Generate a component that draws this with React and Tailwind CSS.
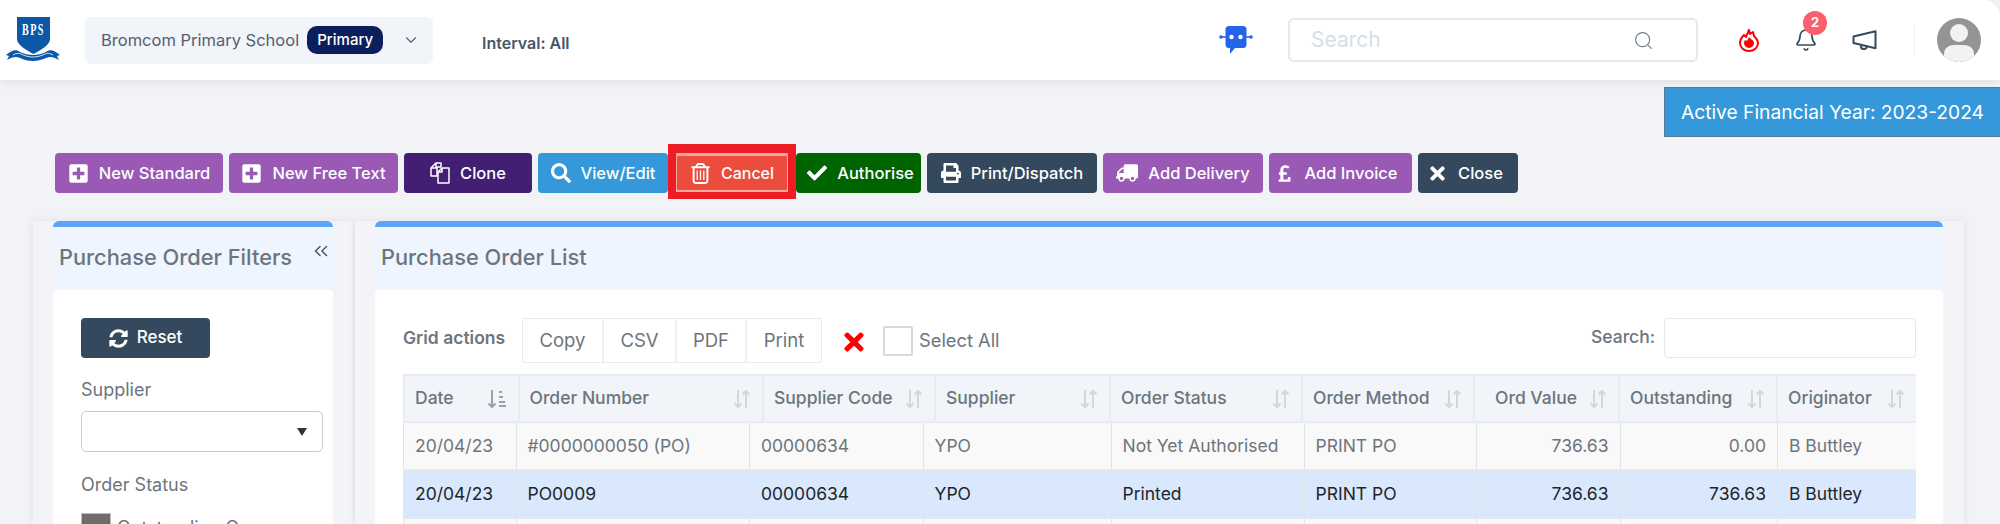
import React from "react";
import { Bell, ChevronDown, ChevronsLeft, Search } from "lucide-react";
import {
  FaCheck,
  FaPlusSquare,
  FaPoundSign,
  FaPrint,
  FaSearch,
  FaSyncAlt,
  FaTimes,
  FaTruck,
} from "react-icons/fa";
import { FaRegTrashCan } from "react-icons/fa6";

const Logo = () => (
  <svg width="56" height="48" viewBox="0 0 56 48" className="shrink-0">
    <path d="M12 1h33v22c0 6-9 11-16.500 15C21 34 12 29 12 23z" fill="#0b57a8" />
    <text transform="translate(28.500 19) scale(0.72 1.25)" textAnchor="middle" fill="#fff" fontSize="14" fontWeight="700" fontFamily="Liberation Serif, serif" letterSpacing="2">
      BPS
    </text>
    <path d="M1 39c6-5 10-6 14-3 8 4 18 4 26 0 4-3 8-2 14 3l-3 1 2 4c-5-3-9-4-13-2-9 4-18 4-26 0-4-2-8-1-13 2l2-4z" fill="#0b57a8" />
    <path d="M8 39c3-2 6-2 8-1 8 4 16 4 24 0 2-1 5-1 8 1" stroke="#fff" strokeWidth="0.8" fill="none" />
  </svg>
);

const RobotIcon = () => (
  <svg width="34" height="28" viewBox="0 0 34 28">
    <path d="M1 11h32" stroke="#2563eb" strokeWidth="1.600" />
    <circle cx="2" cy="11" r="1.800" fill="#2563eb" />
    <circle cx="32" cy="11" r="1.800" fill="#2563eb" />
    <path d="M10 0h14a3.500 3.500 0 0 1 3.500 3.500v15A3.500 3.500 0 0 1 24 22h-8l-5 6v-6h-1a3.500 3.500 0 0 1-3.500-3.500v-15A3.500 3.500 0 0 1 10 0z" fill="#2563eb" />
    <circle cx="12.500" cy="11" r="2.200" fill="#fff" />
    <circle cx="21.500" cy="11" r="2.200" fill="#fff" />
  </svg>
);

const FireIcon = () => (
  <svg width="20" height="23" viewBox="0 0 20 23">
    <path d="M10 1l1 4 3-2 1 4c2 2 4 4 4 7a9 8 0 0 1-18 0c0-3 2-6 4-8l2 2z" fill="none" stroke="#f00" strokeWidth="2" strokeLinejoin="round" />
    <path d="M10 8c1 2 5 3 5 6a5 5 0 0 1-10 0c0-1 .5-2 1-3l2 1z" fill="#f00" />
  </svg>
);

const MegaphoneIcon = () => (
  <svg width="25" height="20" viewBox="0 0 25 20" fill="none" stroke="#34495e" strokeWidth="2" strokeLinejoin="round" className="shrink-0">
    <path d="M1.500 6.500L23.500 1.200v17L1.500 13z" />
    <path d="M9 15.500a3 3 0 0 0 6 1" />
  </svg>
);

const AvatarIcon = () => (
  <svg width="44" height="44" viewBox="0 0 44 44" className="shrink-0">
    <defs>
      <clipPath id="avatar-clip">
        <circle cx="22" cy="22" r="22" />
      </clipPath>
    </defs>
    <circle cx="22" cy="22" r="22" fill="#949494" />
    <g clipPath="url(#avatar-clip)">
      <circle cx="22" cy="15" r="9" fill="#f2f2f2" />
      <path d="M7 44V36c0-6 5-9 10-9h10c5 0 10 3 10 9v8z" fill="#f2f2f2" />
    </g>
  </svg>
);

const CloneIcon = () => (
  <svg width="20" height="22" viewBox="0 0 20 22" fill="none" stroke="#fff" strokeWidth="1.500" strokeLinejoin="round">
    <path d="M6 1h5v4H7v9H1V6z" />
    <path d="M6 1v5H1" />
    <path d="M12 6h7v15H8V10z" />
    <path d="M12 6v4H8" />
  </svg>
);

const SortIcon = () => (
  <svg width="18" height="20" viewBox="0 0 18 20" fill="none" stroke="#d3d6da" strokeWidth="2" className="shrink-0">
    <path d="M5 1v17M1.500 14.500L5 18l3.500-3.500" />
    <path d="M13 19V2M9.500 5.500L13 2l3.500 3.500" />
  </svg>
);

const SortDateIcon = () => (
  <svg width="20" height="20" viewBox="0 0 20 20" fill="none" stroke="#9aa1a8" strokeWidth="2" className="shrink-0">
    <path d="M5 1v17M1.500 14.500L5 18l3.500-3.500" />
    <path d="M12 3h3M12 8h4M12 13h6M12 17h7" strokeWidth="1.800" />
  </svg>
);

const toolbar = [
  { label: "New Standard", icon: <FaPlusSquare size={21} />, bg: "bg-[#9b59b6]", width: "w-[168px]" },
  { label: "New Free Text", icon: <FaPlusSquare size={21} />, bg: "bg-[#9b59b6]", width: "w-[169px]" },
  { label: "Clone", icon: <CloneIcon />, bg: "bg-[#431f73]", width: "w-[128px]" },
  { label: "View/Edit", icon: <FaSearch size={20} />, bg: "bg-[#3498db]", width: "w-[130px]" },
];

const toolbarRight = [
  { label: "Authorise", icon: <FaCheck size={20} />, bg: "bg-[#006400]", width: "w-[125px] pl-[4px]" },
  { label: "Print/Dispatch", icon: <FaPrint size={20} />, bg: "bg-[#34495e]", width: "w-[170px]" },
  { label: "Add Delivery", icon: <FaTruck size={22} className="-scale-x-100" />, bg: "bg-[#9b59b6]", width: "w-[160px]" },
  { label: "Add Invoice", icon: <FaPoundSign size={19} />, bg: "bg-[#9b59b6]", width: "w-[143px] pr-[8px]" },
  { label: "Close", icon: <FaTimes size={21} />, bg: "bg-[#34495e]", width: "w-[100px] pr-[6px]" },
];

const ToolButton = ({ label, icon, bg, width }) => (
  <button className={`${bg} ${width} h-10 rounded-[4px] flex items-center justify-center gap-[10px] text-white text-[16.500px] font-medium whitespace-nowrap shrink-0`}>
    {icon}
    {label}
  </button>
);

const headCols = "grid-cols-[114.500px_244.500px_172px_175px_192px_171.500px_145.500px_158px_140px]";
const bodyCols = "grid-cols-[112.500px_233.500px_173.500px_188px_193px_172.500px_143.500px_157.500px_139px]";

const headers = [
  { label: "Date" },
  { label: "Order Number" },
  { label: "Supplier Code" },
  { label: "Supplier" },
  { label: "Order Status" },
  { label: "Order Method" },
  { label: "Ord Value", right: true },
  { label: "Outstanding" },
  { label: "Originator" },
];

const rows = [
  { cells: ["20/04/23", "#0000000050 (PO)", "00000634", "YPO", "Not Yet Authorised", "PRINT PO", "736.63", "0.00", "B Buttley"], className: "bg-[#f9f9f9] text-[#6c757d]" },
  { cells: ["20/04/23", "PO0009", "00000634", "YPO", "Printed", "PRINT PO", "736.63", "736.63", "B Buttley"], className: "bg-[#d9e8fd] text-[#212529]" },
  { cells: ["", "", "", "", "", "", "", "", ""], className: "bg-[#f9f9f9] text-[#6c757d]" },
];

const PanelHead = ({ title, children }) => (
  <div className="h-[69px] bg-[#eef5ff] border-t-[6px] border-[#5ba4f8] rounded-t-[6px] pl-[6px] pb-[3px] relative flex items-center text-[21.800px] font-medium text-[#6c757d]">
    {title}
    {children}
  </div>
);

export default function App() {
  return (
    <div className="w-[2000px] h-[524px] overflow-hidden bg-[#f1f3f7] font-['Inter',sans-serif]">
      {/* top bar */}
      <div className="h-20 bg-white rounded-tr-2xl shadow-[0_2px_8px_rgba(0,0,0,0.08)] flex items-center pl-[5px] relative">
        <Logo />
        <div className="ml-6 w-[348px] h-[47px] bg-[#f1f4f9] rounded-[6px] flex items-center pl-4 text-[16.500px] text-[#556070] shrink-0">
          <span className="whitespace-nowrap">Bromcom Primary School</span>
          <span className="ml-[8px] w-[76px] h-7 rounded-[10px] bg-[#0c1f5c] text-white text-[15px] font-medium flex items-center justify-center">Primary</span>
          <ChevronDown size={18} strokeWidth={1.500} className="ml-[19px] text-[#556070]" />
        </div>
        <span className="ml-[49px] w-[92px] whitespace-nowrap text-[16px] font-semibold text-[#475569] pt-[5px]">Interval: All</span>
        <div className="ml-[645px]">
          <RobotIcon />
        </div>
        <div className="ml-[35px] w-[410px] h-11 border-2 border-[#e2e8f0] rounded-[6px] flex items-center justify-between pl-[21px] pr-[42px] text-[21px] text-[#d5deea] shrink-0">
          <span>Search</span>
          <Search size={21} strokeWidth={1.300} className="text-[#737f8e]" />
        </div>
        <div className="ml-[41px]">
          <FireIcon />
        </div>
        <div className="ml-[35px] relative">
          <Bell size={24} strokeWidth={1.700} className="text-[#34495e]" />
          <span className="absolute -top-[17px] left-[9px] w-6 h-6 rounded-full bg-[#fb5f6b] text-white text-[13px] font-bold flex items-center justify-center">2</span>
        </div>
        <div className="ml-[34px]">
          <MegaphoneIcon />
        </div>
        <div className="ml-[37px] w-px h-8 bg-[#eef1f5]" />
        <div className="ml-[22px]">
          <AvatarIcon />
        </div>
      </div>

      {/* financial year */}
      <div className="flex justify-end mt-[7px]">
        <div className="w-[336px] h-[50px] bg-[#3498db] border border-[#5b7a95] border-r-0 flex items-center pl-4 text-white text-[19.200px] whitespace-nowrap">
          Active Financial Year: 2023-2024
        </div>
      </div>

      {/* actions */}
      <div className="flex gap-[6px] pl-[55px] mt-4">
        {toolbar.map((b) => (
          <ToolButton key={b.label} {...b} />
        ))}
        <div className="relative shrink-0">
          <button className="w-[116px] h-10 rounded-[4px] bg-[#ec4c3c] shadow-[inset_0_0_0_3px_#f5a89e] flex items-center justify-center gap-[10px] text-white text-[16px] font-medium">
            <FaRegTrashCan size={21} />
            Cancel
          </button>
          <span className="absolute -top-[9px] -bottom-[6px] -left-[6px] -right-[6px] border-[#ee1c25] border-x-[8px] border-t-[9px] border-b-[7px]" />
        </div>
        {toolbarRight.map((b) => (
          <ToolButton key={b.label} {...b} />
        ))}
      </div>

      {/* panels */}
      <div className="flex gap-[2px] pl-[33px] mt-7">
        <div className="w-[320px] h-[303px] px-5 bg-[#f2f4f8] shadow-[0_0_8px_rgba(0,0,0,0.08)] shrink-0">
          <PanelHead title="Purchase Order Filters">
            <ChevronsLeft size={22} strokeWidth={1.600} className="absolute right-[1px] top-[13px] text-[#4b5563]" />
          </PanelHead>
          <div className="h-full bg-white rounded-[4px] pt-7 px-7 text-[18px] text-[#6c757d]">
            <button className="w-[129px] h-10 rounded-[4px] bg-[#34495e] text-white text-[17px] font-medium flex items-center justify-center gap-[9px]">
              <FaSyncAlt size={19} />
              Reset
            </button>
            <div className="mt-[22px] leading-5">Supplier</div>
            <div className="mt-[11px] -mr-[18px] h-[41px] border border-[#ccc] rounded-[5px] flex items-center justify-end pr-[15px]">
              <span className="w-0 h-0 border-x-[5px] border-x-transparent border-t-[8px] border-t-[#333]" />
            </div>
            <div className="mt-[23px] leading-5">Order Status</div>
            <div className="mt-[18px] flex items-start gap-[6px]">
              <span className="w-[30px] h-[30px] bg-[#716c6c] border border-[#bbb] shrink-0" />
              <span className="pt-[1px] whitespace-nowrap">Outstanding Group</span>
            </div>
          </div>
        </div>

        <div className="w-[1609px] h-[303px] pl-5 pr-[21px] bg-[#f2f4f8] shadow-[0_0_8px_rgba(0,0,0,0.08)] shrink-0">
          <PanelHead title="Purchase Order List" />
          <div className="h-full bg-white rounded-[4px] pt-7 pl-[28px] pr-[27px]">
            <div className="flex items-start h-[56px]">
              <span className="w-[119px] pt-[10px] text-[17.500px] font-semibold text-[#6c757d] leading-5 whitespace-nowrap">Grid actions</span>
              <div className="flex w-[300px] h-[45px] border border-[#e9ecef] rounded-[2px] text-[18.500px] text-[#6c757d]">
                <span className="w-[81px] flex items-center justify-center border-r-2 border-[#eef0f2]">Copy</span>
                <span className="w-[73px] flex items-center justify-center border-r-2 border-[#eef0f2]">CSV</span>
                <span className="w-[70px] flex items-center justify-center border-r-2 border-[#eef0f2]">PDF</span>
                <span className="flex-1 flex items-center justify-center">Print</span>
              </div>
              <FaTimes size={28} className="ml-[18px] mt-[10px] text-[#f00]" />
              <span className="ml-[15px] mt-2 w-[30px] h-[30px] border-2 border-[#d8d8d8] rounded-[2px]" />
              <span className="ml-[6px] pt-3 text-[18.300px] text-[#6c757d] leading-5 whitespace-nowrap">Select All</span>
              <span className="ml-auto pt-[9px] text-[17.500px] font-medium text-[#6c757d] leading-5">Search:</span>
              <span className="ml-[9px] w-[252px] h-10 border border-[#e6e8eb] rounded-[4px]" />
            </div>
            <div className={`grid ${headCols} h-[49px] bg-[#f1f4f9] border-y-2 border-[#e8ebef] text-[17.500px] font-medium text-[#6c757d]`}>
              {headers.map((h, i) => (
                <div key={h.label} className={`flex items-center pl-[10px] pr-[11px] border-l-2 border-[#e8ebef] ${h.right ? "justify-end gap-3" : "justify-between gap-2"}`}>
                  <span className="whitespace-nowrap">{h.label}</span>
                  {i === 0 ? <SortDateIcon /> : <SortIcon />}
                </div>
              ))}
            </div>
            {rows.map((row, r) => (
              <div key={r} className={`grid ${bodyCols} h-12 border-b-2 border-[#e6e8eb] text-[17.500px] ${row.className}`}>
                {row.cells.map((cell, i) => (
                  <div key={i} className={`flex items-center px-[11px] border-l border-[#e2e4e7] whitespace-nowrap ${i === 6 || i === 7 ? "justify-end" : ""}`}>
                    {cell}
                  </div>
                ))}
              </div>
            ))}
          </div>
        </div>
      </div>
    </div>
  );
}
